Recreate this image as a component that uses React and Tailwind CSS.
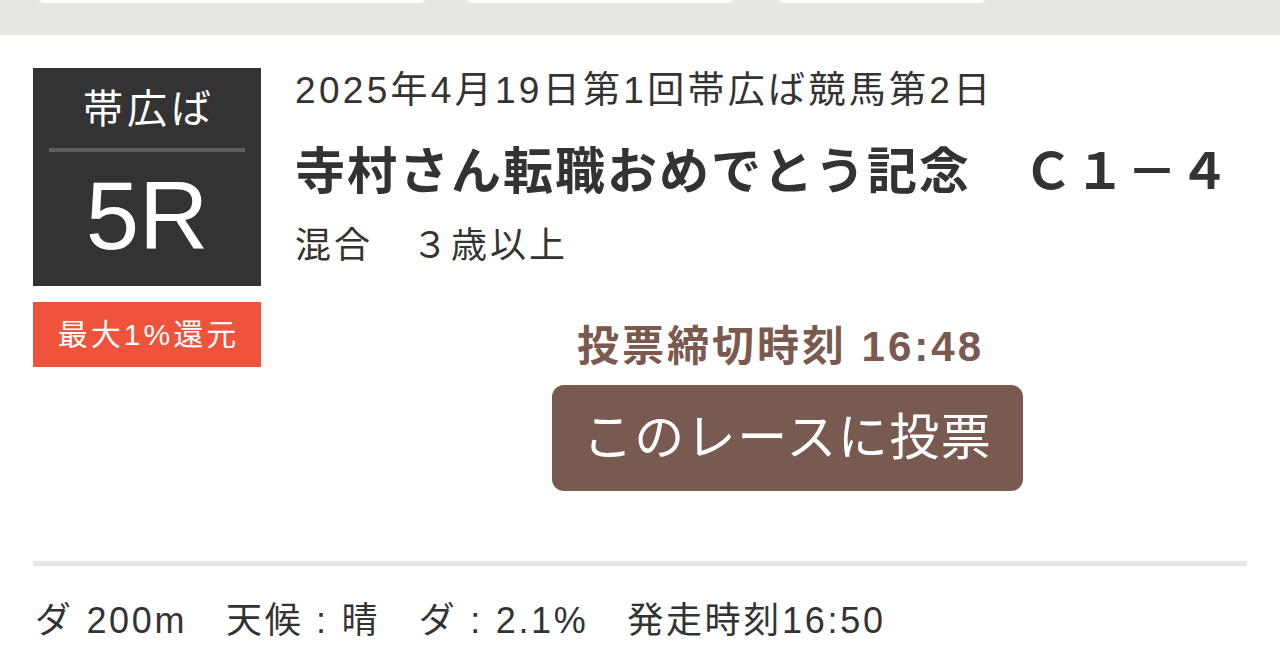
import React from 'react';

const jp = "font-['Liberation_Sans','Noto_Sans_CJK_JP',sans-serif]";

const Tabs = () => (
  <div className="h-[35px] bg-[#e6e6e2] overflow-hidden flex items-start pl-[37px]">
    <div className="w-[390px] h-[12px] -mt-[9px] bg-white rounded-b-[8px]" />
    <div className="w-[270px] h-[12px] -mt-[9px] bg-white rounded-b-[8px] ml-[38px]" />
    <div className="w-[210px] h-[12px] -mt-[9px] bg-white rounded-b-[8px] ml-[42px]" />
  </div>
);

const RaceBadge = () => (
  <div className="w-[228px] shrink-0 pt-[33px]">
    <div className="h-[218px] bg-[#333333] flex flex-col items-center">
      <div className="h-[80px] flex items-center justify-center text-white text-[40px] tracking-[4px] pl-[4px] pt-[2px]">
        帯広ば
      </div>
      <div className="w-[196px] h-[4px] bg-[#5f5f5f]" />
      <div className="flex-1 flex items-center justify-center text-white text-[96px] font-['Liberation_Sans',sans-serif] leading-none pb-[6px]">
        5R
      </div>
    </div>
    <div className="mt-[16px] h-[65px] bg-[#ef533b] flex items-center justify-center text-white text-[30px] tracking-[3px] pl-[3px]">
      最大1%還元
    </div>
  </div>
);

export default function App() {
  return (
    <div className={`w-[1280px] h-[670px] bg-white overflow-hidden text-[#333333] ${jp}`}>
      <Tabs />
      <div className="px-[33px]">
        <div className="flex gap-[34px] h-[526px]">
          <RaceBadge />
          <div className="flex-1 flex flex-col pt-[33px] -mr-[33px]">
            <div className="h-[46px] leading-[46px] text-[37px] tracking-[3.3px] whitespace-nowrap">
              2025年4月19日第1回帯広ば競馬第2日
            </div>
            <div className="mt-[29px] h-[58px] leading-[58px] text-[50px] font-bold tracking-[2px] whitespace-nowrap">
              寺村さん転職おめでとう記念　Ｃ１－４
            </div>
            <div className="mt-[22px] h-[46px] leading-[46px] text-[36px] tracking-[3px] whitespace-nowrap">
              混合　３歳以上
            </div>
            <div className="flex flex-col items-center mt-[54px]">
              <div className="h-[48px] leading-[48px] text-[42px] font-bold text-[#7a5a4f] tracking-[3px] pr-[14px]">
                投票締切時刻 16:48
              </div>
              <button className="mt-[14px] w-[471px] h-[106px] rounded-[12px] bg-[#795a50] text-white text-[50px] tracking-[1.5px]">
                このレースに投票
              </button>
            </div>
          </div>
        </div>
        <div className="h-[5px] bg-[#e6e6e6]" />
        <div className="mt-[32px] h-[46px] leading-[46px] text-[36px] tracking-[2.7px] whitespace-nowrap pl-[2px]">
          ダ 200m　天候 : 晴　ダ : 2.1%　発走時刻16:50
        </div>
      </div>
    </div>
  );
}
